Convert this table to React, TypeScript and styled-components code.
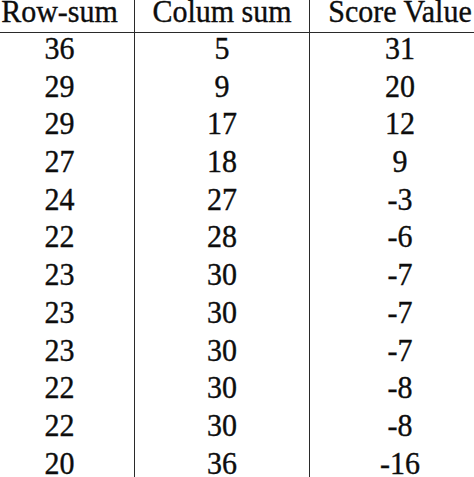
import React from "react";
import styled, { createGlobalStyle } from "styled-components";

const Global = createGlobalStyle`
  html, body { margin: 0; padding: 0; background: #fff; overflow: hidden; }
  body { width: 474px; height: 477px; }
`;

const Frame = styled.div`
  width: 474px;
  height: 477px;
  overflow: hidden;
  background: #fff;
`;

const Table = styled.div`
  display: grid;
  grid-template-columns: 150px 175px 180px;
  margin-left: -15px;
  font-family: "Liberation Serif", "Times New Roman", serif;
  font-size: 30px;
  color: #0d0d0d;
`;

const HeadCell = styled.div<{ $last?: boolean }>`
  height: 33px;
  line-height: 24px;
  padding-bottom: 8px;
  box-sizing: border-box;
  text-align: center;
  white-space: nowrap;
  border-bottom: 1px solid #2a2a2a;
  border-right: ${(p) => (p.$last ? "none" : "1px solid #2a2a2a")};
`;

const Cell = styled.div<{ $last?: boolean }>`
  height: 37.7px;
  line-height: 31.7px;
  padding-bottom: 6px;
  box-sizing: border-box;
  text-align: center;
  white-space: nowrap;
  border-right: ${(p) => (p.$last ? "none" : "1px solid #2a2a2a")};
`;

const Txt = styled.span`
  display: inline-block;
  transform: scaleY(1.07);
  transform-origin: 50% 78%;
  -webkit-text-stroke: 0.35px #0d0d0d;
`;

const headers = ["Row-sum", "Colum sum", "Score Value"];
const rows: [number, number, number][] = [
  [36, 5, 31],
  [29, 9, 20],
  [29, 17, 12],
  [27, 18, 9],
  [24, 27, -3],
  [22, 28, -6],
  [23, 30, -7],
  [23, 30, -7],
  [23, 30, -7],
  [22, 30, -8],
  [22, 30, -8],
  [20, 36, -16],
];

export default function App() {
  return (
    <Frame>
      <Global />
      <Table>
        {headers.map((h, i) => (
          <HeadCell key={h} $last={i === 2}>
            <Txt>{h}</Txt>
          </HeadCell>
        ))}
        {rows.map((r, ri) =>
          r.map((v, ci) => (
            <Cell key={`${ri}-${ci}`} $last={ci === 2}>
              <Txt>{v}</Txt>
            </Cell>
          ))
        )}
      </Table>
    </Frame>
  );
}
